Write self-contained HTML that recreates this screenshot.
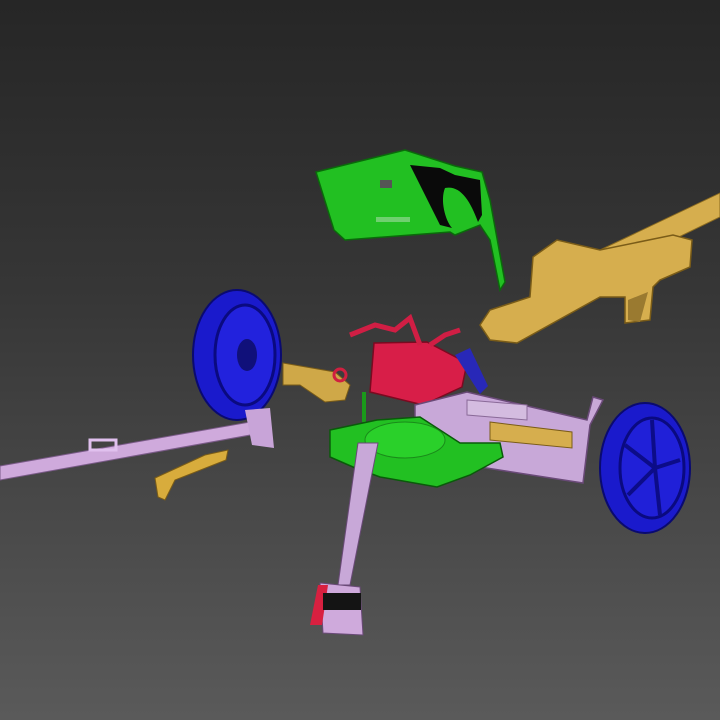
<!DOCTYPE html>
<html><head><style>
html,body{margin:0;padding:0;width:720px;height:720px;overflow:hidden}
body{background:linear-gradient(#262626 0%,#363636 40%,#5a5a5a 100%)}
svg{position:absolute;left:0;top:0}
</style></head><body>
<svg width="720" height="720" viewBox="0 0 720 720">
<!-- green shield -->
<polygon points="316,172 405,150 455,166 482,172 490,200 505,282 500,290 490,240 480,225 455,235 450,232 345,240 334,230" fill="#22c022" stroke="#0a6a0a" stroke-width="1.5"/>
<path d="M410,165 L440,168 L455,175 L480,180 L482,215 L478,222 C470,200 460,185 445,188 C440,200 445,220 452,228 L440,225 Z" fill="#0a0a0a"/>
<rect x="376" y="217" width="34" height="5" fill="#6fd06f"/>
<rect x="380" y="180" width="12" height="8" fill="#555"/>
<!-- gold barrel -->
<polygon points="600,250 720,193 720,217 615,268" fill="#d6ae4e" stroke="#8a6a20" stroke-width="1"/>
<polygon points="480,325 490,310 530,297 533,257 557,240 600,250 673,235 692,240 690,267 660,280 653,287 650,320 625,323 625,297 600,297 517,343 490,340" fill="#d6ae4e" stroke="#7a5c18" stroke-width="1.5"/>
<polygon points="628,300 648,292 640,322 628,320" fill="#9a7a30"/>
<!-- left wheel -->
<ellipse cx="237" cy="355" rx="44" ry="65" fill="#1a1acc" stroke="#0a0a70" stroke-width="2"/>
<ellipse cx="245" cy="355" rx="30" ry="50" fill="#2222dd" stroke="#0a0a80" stroke-width="3"/>
<ellipse cx="247" cy="355" rx="10" ry="16" fill="#10107a"/>
<!-- right wheel -->
<ellipse cx="645" cy="468" rx="45" ry="65" fill="#1a1acc" stroke="#0a0a70" stroke-width="2"/>
<ellipse cx="652" cy="468" rx="32" ry="50" fill="#2020d8" stroke="#0a0a80" stroke-width="3"/>
<g stroke="#0c0c88" stroke-width="4">
<line x1="652" y1="420" x2="655" y2="468"/><line x1="625" y1="445" x2="655" y2="468"/><line x1="628" y1="495" x2="655" y2="468"/><line x1="660" y1="515" x2="655" y2="468"/><line x1="680" y1="460" x2="655" y2="468"/>
</g>
<!-- left trail -->
<polygon points="0,466 250,422 256,434 0,480" fill="#cfaadc" stroke="#7a5a88" stroke-width="1"/>
<rect x="90" y="440" width="26" height="10" fill="none" stroke="#e0c0ee" stroke-width="3"/>
<polygon points="245,410 270,408 274,448 252,445" fill="#c8a4d8"/>
<!-- gold bracket -->
<polygon points="155,478 205,455 228,450 226,460 175,480 165,500 158,497" fill="#d8ac3c" stroke="#7a5c18"/>
<!-- gold axle left -->
<polygon points="283,363 335,372 350,385 345,400 325,402 300,385 283,385" fill="#cfa848" stroke="#7a5c18"/>
<circle cx="340" cy="375" r="6" fill="none" stroke="#d02040" stroke-width="3"/>
<!-- red cradle -->
<polygon points="374,343 427,342 467,363 462,387 423,405 370,392" fill="#d81e48" stroke="#7a0a20" stroke-width="1.5"/>
<path d="M350,335 L375,325 L395,330 L410,318 L420,345 M430,345 L445,335 L460,330" stroke="#d01e44" stroke-width="5" fill="none"/>
<!-- blue elevating tube -->
<polygon points="455,355 470,348 488,386 480,394" fill="#2828b8"/>
<!-- green post -->
<rect x="362" y="392" width="4" height="30" fill="#1a9a1a"/>
<!-- purple box -->
<polygon points="415,405 467,392 587,420 593,397 603,400 590,425 583,483 480,467 415,450" fill="#c8a8d8" stroke="#6a4a78" stroke-width="1.5"/>
<polygon points="467,400 527,405 527,420 467,415" fill="#d4bce0" stroke="#8a6a98"/>
<!-- gold tube right -->
<polygon points="490,422 572,432 572,448 490,440" fill="#d6ae4e" stroke="#7a5c18"/>
<!-- green lower carriage -->
<polygon points="330,430 377,420 420,417 460,443 500,443 503,457 470,475 437,487 380,477 353,467 330,457" fill="#22c022" stroke="#0a5a0a" stroke-width="1.5"/>
<ellipse cx="405" cy="440" rx="40" ry="18" fill="#2ad02a" stroke="#1a8a1a"/>
<!-- lower trail -->
<polygon points="358,443 378,443 350,585 338,585" fill="#c8a8d8" stroke="#6a4a78"/>
<!-- spade -->
<polygon points="320,583 360,587 363,635 323,633" fill="#cfaadc" stroke="#6a4a78"/>
<polygon points="318,585 328,585 322,625 310,625" fill="#d82040"/>
<rect x="323" y="593" width="38" height="17" fill="#141414"/>
</svg>
</body></html>
